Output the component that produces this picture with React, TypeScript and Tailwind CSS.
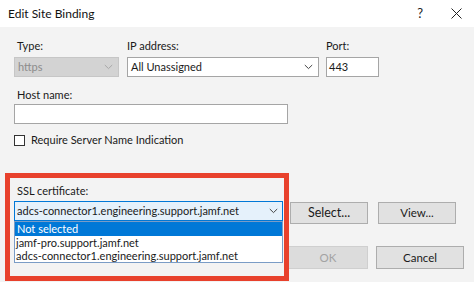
import React from "react";

const Chevron = ({ color = "#444" }: { color?: string }) => (
  <svg width="9" height="6" viewBox="0 0 9 6" fill="none">
    <path d="M0.8 1 L4.5 4.6 L8.2 1" stroke={color} strokeWidth="1" />
  </svg>
);

export default function App() {
  return (
    <div
      className="relative w-[474px] h-[282px] overflow-hidden bg-[#f3f3f3] text-[11px] text-[#1a1a1a]"
      style={{ fontFamily: 'Lato, "Noto Sans", sans-serif' }}
    >
      {/* title bar */}
      <div className="h-[27px] bg-white flex items-center pl-[8px] pr-[12px]">
        <span className="text-[12px] text-[#111]">Edit Site Binding</span>
        <div className="ml-auto flex items-center gap-[28px]">
          <span className="text-[13px] text-[#222]">?</span>
          <svg width="11" height="11" viewBox="0 0 11 11">
            <path d="M0.5 0.5 L10.5 10.5 M10.5 0.5 L0.5 10.5" stroke="#222" strokeWidth="1" />
          </svg>
        </div>
      </div>

      <div className="pl-[14px] pt-[11px]">
        {/* row 1 */}
        <div className="flex gap-[8px]">
          <div className="w-[105px] flex flex-col">
            <span className="h-[16px] leading-[16px] pl-[3px] mb-[3px]">Type:</span>
            <div className="h-[20px] bg-[#d3d3d3] border border-[#c6c6c6] flex items-center pl-[3px] pr-[5px]">
              <span className="text-[#8c8c8c]">https</span>
              <span className="ml-auto"><Chevron color="#a8a8a8" /></span>
            </div>
          </div>
          <div className="w-[192px] flex flex-col">
            <span className="h-[16px] leading-[16px] mb-[3px]">IP address:</span>
            <div className="h-[20px] bg-white border border-[#a5a5a5] flex items-center pl-[3px] pr-[5px]">
              <span>All Unassigned</span>
              <span className="ml-auto"><Chevron /></span>
            </div>
          </div>
          <div className="w-[53px] flex flex-col ml-[-1px]">
            <span className="h-[16px] leading-[16px] mb-[3px]">Port:</span>
            <div className="h-[20px] bg-white border border-[#a5a5a5] flex items-center pl-[2px]">
              <span>443</span>
            </div>
          </div>
        </div>

        {/* host name */}
        <div className="mt-[10px] flex flex-col w-[274px]">
          <span className="h-[16px] leading-[16px] pl-[3px] mb-[1px]">Host name:</span>
          <div className="h-[20px] bg-white border border-[#a5a5a5]" />
        </div>

        {/* checkbox */}
        <div className="mt-[10px] flex items-center gap-[6px] h-[12px]">
          <div className="w-[11px] h-[11px] border border-[#333] bg-white" />
          <span className="leading-[12px]">Require Server Name Indication</span>
        </div>

        {/* ssl */}
        <div className="mt-[37px] flex items-end gap-[7px]">
          <div className="w-[269px] flex flex-col">
            <span className="h-[16px] leading-[16px] pl-[3px] mb-[2px]">SSL certificate:</span>
            <div className="h-[20px] bg-[#e5f1fb] border border-[#0078d7] flex items-center pl-[2px] pr-[4px]">
              <span className="whitespace-nowrap overflow-hidden">adcs-connector1.engineering.support.jamf.net</span>
              <span className="ml-auto pl-[2px]"><Chevron /></span>
            </div>
          </div>
          <div className="w-[78px] h-[22px] mb-[-3px] bg-[#e1e1e1] border border-[#adadad] flex items-center justify-center text-[12.5px]">
            Select...
          </div>
          <div className="w-[78px] h-[22px] mb-[-3px] ml-[3px] bg-[#e1e1e1] border border-[#adadad] flex items-center justify-center text-[11.5px]">
            View...
          </div>
        </div>

        {/* ok / cancel */}
        <div className="mt-[25px] flex justify-end gap-[8px] pr-[10px]">
          <div className="w-[80px] h-[23px] bg-[#dcdcdc] border border-[#cfcfcf] flex items-center justify-center text-[#a3a3a3] text-[11.5px]">
            OK
          </div>
          <div className="w-[88px] h-[23px] bg-[#e1e1e1] border border-[#adadad] flex items-center justify-center text-[11.5px]">
            Cancel
          </div>
        </div>
      </div>

      {/* dropdown list overlay */}
      <div className="absolute left-[14px] top-[221px] w-[269px] h-[42px] bg-white border border-[#7a9cc6] flex flex-col">
        <div className="h-[14px] leading-[14px] bg-[#0078d7] text-white pl-[2px]">Not selected</div>
        <div className="h-[13px] leading-[13px] pl-[1px]">jamf-pro.support.jamf.net</div>
        <div className="h-[13px] leading-[13px] pl-[1px] whitespace-nowrap">adcs-connector1.engineering.support.jamf.net</div>
      </div>

      {/* red highlight annotation */}
      <div className="absolute left-[5px] top-[173px] w-[284px] h-[108px] border-[5px] border-[#e8412c] pointer-events-none" />
    </div>
  );
}
